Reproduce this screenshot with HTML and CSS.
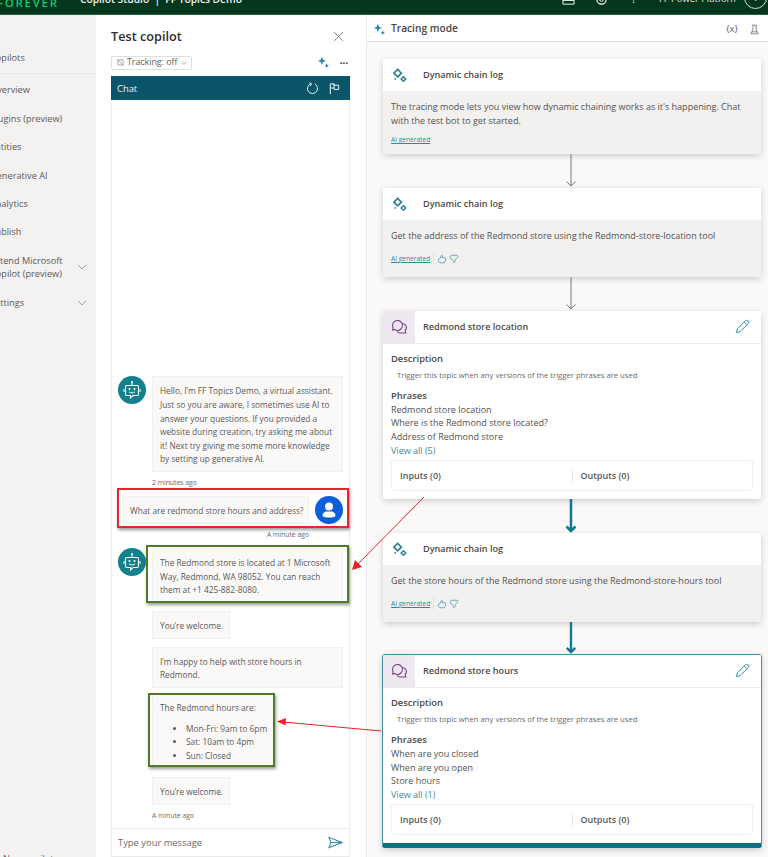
FILE: index.html
```html
<!DOCTYPE html>
<html lang="en">
<head>
<meta charset="utf-8">
<title>Copilot Studio</title>
<link rel="stylesheet" href="styles.css">
</head>
<body>
<svg class="defs" width="0" height="0" aria-hidden="true">
  <symbol id="spark-out" viewBox="0 0 16 16"><path d="M6 1.500 10 5.500 6 9.500 2 5.500Z" fill="none" stroke="currentColor" stroke-width="1.800"/><path d="M12.200 9.400 14.600 11.800 12.200 14.200 9.800 11.800Z" fill="none" stroke="currentColor" stroke-width="1.600"/><path d="M3.400 10.400 4.600 11.600 3.400 12.800 2.200 11.600Z" fill="currentColor"/></symbol>
  <symbol id="spark-fill" viewBox="0 0 16 16"><path d="M6 1 7.500 4.500 11 6 7.500 7.500 6 11 4.500 7.500 1 6 4.500 4.500Z" fill="currentColor"/><path d="M12 9.500 13 11 14.500 12 13 13 12 14.500 11 13 9.500 12 11 11Z" fill="currentColor"/></symbol>
  <symbol id="bot" viewBox="0 0 28 28"><circle cx="14" cy="14" r="14" fill="#13818c"/><path d="M14 6.500V9M9 9.500h10a1.500 1.500 0 0 1 1.500 1.500v7a1.500 1.500 0 0 1-1.500 1.500h-4l-2.500 2.500v-2.500H9A1.500 1.500 0 0 1 7.500 18v-7A1.500 1.500 0 0 1 9 9.500Z" fill="none" stroke="#fff" stroke-width="1.100"/><circle cx="14" cy="6" r="1" fill="#fff"/><circle cx="11.500" cy="13" r="1" fill="#fff"/><circle cx="16.500" cy="13" r="1" fill="#fff"/><path d="M11 15.800c1.500 1.500 4.500 1.500 6 0M6 13v3M22 13v3" fill="none" stroke="#fff" stroke-width="1"/></symbol>
  <symbol id="person" viewBox="0 0 28 28"><circle cx="14" cy="14" r="14" fill="#0b5fdc"/><circle cx="14" cy="10.500" r="4" fill="#fff"/><path d="M7.500 20c0-3 2-4.500 4-4.500h5c2 0 4 1.500 4 4.500 0 .8-3 1.500-6.500 1.500S7.500 20.800 7.500 20Z" fill="#fff"/></symbol>
  <symbol id="pencil" viewBox="0 0 16 16"><path d="M1.500 14.500 2.500 10.500 11 2a1.800 1.800 0 0 1 3 3l-8.500 8.500ZM9.800 3.200 12.800 6.200" fill="none" stroke="currentColor" stroke-width="1"/></symbol>
  <symbol id="chats" viewBox="0 0 16 16"><path d="M1.500 6.500a5 5 0 1 1 2 4l-2 .7.700-2a5 5 0 0 1-.7-2.700Z" fill="none" stroke="currentColor" stroke-width="1.100"/><path d="M11.300 4.500a4 4 0 0 1 2.900 6.800l.5 2.700H9a4 4 0 0 1-3-1.500" fill="none" stroke="currentColor" stroke-width="1.100"/></symbol>
  <symbol id="up" viewBox="0 0 12 12"><path d="M3.500 5.500 5.500 1.500c1 0 1 1 .8 3h3.200c.8 0 1.200.7 1 1.400L9.500 9.500c-.2.700-.7 1-1.300 1H5c-2.500 0-4-1.700-3.500-3.500.2-.8 1-1.500 2-1.500Z" fill="none" stroke="currentColor" stroke-width=".8"/></symbol>
  <symbol id="down" viewBox="0 0 12 12"><path d="M3 1.500h6.500c.8 0 1.300.6 1 1.400C10 5 8.500 6 7.500 6.500c.2 1.500-.2 3-1.500 4-1-1-1-2.500-1.500-3.500C3 6.500 1.500 5.500 1.500 3.500c0-1 .6-2 1.500-2Z" fill="none" stroke="currentColor" stroke-width=".8"/></symbol>
  <symbol id="chev" viewBox="0 0 12 12"><path d="M2 4 6 8 10 4" fill="none" stroke="currentColor" stroke-width=".8"/></symbol>
  <symbol id="arrow" viewBox="0 0 12 34"><path d="M6 0V32M1.500 27.500 6 32 10.500 27.500" fill="none" stroke="currentColor" stroke-width="1"/></symbol>
  <symbol id="arrow-bold" viewBox="0 0 12 34"><path d="M6 0V32M1.500 27.500 6 32 10.500 27.500" fill="none" stroke="currentColor" stroke-width="2.500"/></symbol>
</svg>

<header class="topbar">
  <span class="brand">FOREVER</span>
  <span class="product">Copilot Studio&nbsp; | &nbsp;FF Topics Demo</span>
  <span class="top-actions">
    <svg class="top-icon" viewBox="0 0 14 14"><path d="M1 4h12v8H1ZM4 4V1h6v3M1 8h12" fill="none" stroke="#fff" stroke-width="1"/></svg>
    <svg class="top-icon" viewBox="0 0 14 14"><circle cx="7" cy="7" r="5" fill="none" stroke="#fff" stroke-width="1.200"/><circle cx="7" cy="7" r="2" fill="none" stroke="#fff"/></svg>
    <span class="top-help">?</span>
    <span class="env">FF Power Platform...</span>
    <span class="avatar-top">T</span>
  </span>
</header>

<div class="workspace">
  <nav class="sidenav">
    <div class="nav-head">Copilots</div>
    <ul class="nav-list">
      <li class="nav-item">Overview</li>
      <li class="nav-item">Plugins (preview)</li>
      <li class="nav-item">Entities</li>
      <li class="nav-item">Generative AI</li>
      <li class="nav-item">Analytics</li>
      <li class="nav-item">Publish</li>
      <li class="nav-item nav-tall"><span>Extend Microsoft<br>Copilot (preview)</span><svg class="nav-chev"><use href="#chev"/></svg></li>
      <li class="nav-item"><span>Settings</span><svg class="nav-chev"><use href="#chev"/></svg></li>
    </ul>
    <div class="nav-foot">New copilot</div>
  </nav>

  <section class="test-panel">
    <div class="test-title">
      <h1>Test copilot</h1>
      <svg class="close" viewBox="0 0 12 12"><path d="M1 1 11 11M11 1 1 11" fill="none" stroke="#605e5c" stroke-width=".8"/></svg>
    </div>
    <div class="test-tools">
      <span class="tracking">
        <svg class="track-icon" viewBox="0 0 8 8"><path d="M1 1h6v6H1ZM1 1l6 6" fill="none" stroke="#8a8886" stroke-width=".8"/></svg>
        Tracking: off
        <svg class="track-chev"><use href="#chev"/></svg>
      </span>
      <span class="tool-right">
        <svg class="tool-spark"><use href="#spark-fill"/></svg>
        <span class="dots">···</span>
      </span>
    </div>
    <div class="chat">
      <div class="chat-head">
        <span>Chat</span>
        <span class="chat-actions">
          <svg class="chat-icon" viewBox="0 0 14 14"><path d="M9.500 2.200A5.400 5.400 0 1 1 4.500 2.200" fill="none" stroke="#fff" stroke-width="1"/><path d="M3.500 .8 6 2 4.500 4.300" fill="none" stroke="#fff" stroke-width="1"/></svg>
          <svg class="chat-icon" viewBox="0 0 14 14"><path d="M2.500 13V2h4v1.500h5V8H6.500V6.500h-4M6.500 2v4.500" fill="none" stroke="#fff" stroke-width="1"/></svg>
        </span>
      </div>
      <div class="messages">
        <div class="msg">
          <svg class="msg-avatar"><use href="#bot"/></svg>
          <div class="bubble">Hello, I’m FF Topics Demo, a virtual assistant.<br>Just so you are aware, I sometimes use AI to<br>answer your questions. If you provided a<br>website during creation, try asking me about<br>it! Next try giving me some more knowledge<br>by setting up generative AI.</div>
        </div>
        <div class="stamp stamp-bot">2 minutes ago</div>
        <div class="msg msg-user">
          <div class="bubble">What are redmond store hours and address?</div>
          <svg class="msg-avatar"><use href="#person"/></svg>
        </div>
        <div class="stamp stamp-user">A minute ago</div>
        <div class="msg msg-third">
          <svg class="msg-avatar"><use href="#bot"/></svg>
          <div class="bubble">The Redmond store is located at 1 Microsoft<br>Way, Redmond, WA 98052. You can reach<br>them at +1 425-882-8080.</div>
        </div>
        <div class="bubble bubble-indent bubble-fit">You’re welcome.</div>
        <div class="bubble bubble-indent bubble-full">I’m happy to help with store hours in<br>Redmond.</div>
        <div class="bubble bubble-indent bubble-fit bubble-list">The Redmond hours are:
          <ul class="hours">
            <li>Mon-Fri: 9am to 6pm</li>
            <li>Sat: 10am to 4pm</li>
            <li>Sun: Closed</li>
          </ul>
        </div>
        <div class="bubble bubble-indent bubble-fit bubble-last">You’re welcome.</div>
        <div class="stamp stamp-end">A minute ago</div>
      </div>
      <div class="composer">
        <span>Type your message</span>
        <svg class="send" viewBox="0 0 16 14"><path d="M1 1.500 15 7 1 12.500 3 7ZM3 7H15" fill="none" stroke="#2b8a9b" stroke-width="1.100"/></svg>
      </div>
    </div>
  </section>

  <main class="trace">
    <div class="trace-head">
      <svg class="trace-spark"><use href="#spark-fill"/></svg>
      <span class="trace-title">Tracing mode</span>
      <span class="trace-var">{x}</span>
      <svg class="trace-flask" viewBox="0 0 14 14"><path d="M4 1.500h6M5 1.500V7L2.500 12.500h9L9 7V1.500M3.500 10h7" fill="none" stroke="#605e5c" stroke-width=".9"/></svg>
    </div>
    <div class="flow">
      <article class="card">
        <div class="card-head"><span class="card-mark"><svg class="mark-spark"><use href="#spark-out"/></svg></span><span class="card-name">Dynamic chain log</span></div>
        <div class="log-body">
          <p class="log-text">The tracing mode lets you view how dynamic chaining works as it's happening. Chat<br>with the test bot to get started.</p>
          <div class="log-meta"><a class="ai-link">AI generated</a></div>
        </div>
      </article>
      <svg class="link link-grey"><use href="#arrow"/></svg>
      <article class="card">
        <div class="card-head"><span class="card-mark"><svg class="mark-spark"><use href="#spark-out"/></svg></span><span class="card-name">Dynamic chain log</span></div>
        <div class="log-body">
          <p class="log-text">Get the address of the Redmond store using the Redmond-store-location tool</p>
          <div class="log-meta log-meta-votes"><a class="ai-link">AI generated</a><span class="vote-sep"></span><svg class="vote"><use href="#up"/></svg><svg class="vote"><use href="#down"/></svg></div>
        </div>
      </article>
      <svg class="link link-grey"><use href="#arrow"/></svg>
      <article class="card">
        <div class="card-head card-head-line"><span class="card-mark card-mark-topic"><svg class="mark-chat"><use href="#chats"/></svg></span><span class="card-name">Redmond store location</span><svg class="edit"><use href="#pencil"/></svg></div>
        <div class="topic-body">
          <h3 class="label">Description</h3>
          <p class="desc">Trigger this topic when any versions of the trigger phrases are used</p>
          <h3 class="label">Phrases</h3>
          <p class="phrase">Redmond store location</p>
          <p class="phrase">Where is the Redmond store located?</p>
          <p class="phrase">Address of Redmond store</p>
          <a class="view-all">View all (5)</a>
          <div class="io"><span class="io-cell">Inputs (0)</span><span class="io-cell io-right">Outputs (0)</span></div>
        </div>
      </article>
      <svg class="link link-teal"><use href="#arrow-bold"/></svg>
      <article class="card">
        <div class="card-head"><span class="card-mark"><svg class="mark-spark"><use href="#spark-out"/></svg></span><span class="card-name">Dynamic chain log</span></div>
        <div class="log-body">
          <p class="log-text">Get the store hours of the Redmond store using the Redmond-store-hours tool</p>
          <div class="log-meta log-meta-votes"><a class="ai-link">AI generated</a><span class="vote-sep"></span><svg class="vote"><use href="#up"/></svg><svg class="vote"><use href="#down"/></svg></div>
        </div>
      </article>
      <svg class="link link-teal link-short"><use href="#arrow-bold"/></svg>
      <article class="card card-active">
        <div class="card-head card-head-line"><span class="card-mark card-mark-topic"><svg class="mark-chat"><use href="#chats"/></svg></span><span class="card-name">Redmond store hours</span><svg class="edit"><use href="#pencil"/></svg></div>
        <div class="topic-body">
          <h3 class="label">Description</h3>
          <p class="desc">Trigger this topic when any versions of the trigger phrases are used</p>
          <h3 class="label">Phrases</h3>
          <p class="phrase">When are you closed</p>
          <p class="phrase">When are you open</p>
          <p class="phrase">Store hours</p>
          <a class="view-all">View all (1)</a>
          <div class="io"><span class="io-cell">Inputs (0)</span><span class="io-cell io-right">Outputs (0)</span></div>
        </div>
      </article>
    </div>
  </main>
</div>

<div class="mark mark-red"></div>
<div class="mark mark-green-a"></div>
<div class="mark mark-green-b"></div>
<svg class="callouts" viewBox="0 0 768 857">
  <path d="M424 497 356 566" stroke="#e8232a" stroke-width="1" fill="none"/>
  <path d="M352 570 355 560 362 567Z" fill="#e8232a"/>
  <path d="M381 731 283 722" stroke="#e8232a" stroke-width="1" fill="none"/>
  <path d="M277 721.500 286 718 285.500 725.500Z" fill="#e8232a"/>
</svg>
</body>
</html>
```

FILE: styles.css
```css
* { box-sizing: border-box; }
html, body { margin: 0; padding: 0; }
body {
  position: relative;
  width: 768px;
  height: 857px;
  overflow: hidden;
  background: #fff;
  color: #484644;
  font-family: "Open Sans", "Liberation Sans", sans-serif;
  font-size: 9.4px;
  line-height: 13.6px;
}
p, h1, h3, ul { margin: 0; padding: 0; font-weight: 400; }
.defs { position: absolute; }

.topbar {
  display: flex;
  align-items: flex-end;
  height: 15px;
  padding-bottom: 8px;
  background: #03361b;
  border-bottom: 1px solid #2f5c45;
  color: #fff;
  white-space: nowrap;
}
.brand {
  flex: none;
  width: 80px;
  margin: 0 0 -4px -3px;
  color: #15c874;
  font-size: 11.500px;
  font-weight: 600;
  letter-spacing: 1.700px;
  line-height: 14px;
}
.product { margin-left: 3px; font-size: 10.200px; font-weight: 600; line-height: 14px; color: #f2f2f2; }
.top-actions { margin-left: auto; display: flex; align-items: flex-end; }
.top-icon { flex: none; width: 13px; height: 13px; margin-right: 20px; }
.top-help { width: 12px; margin-right: 19px; line-height: 14px; font-size: 10px; text-align: center; }
.env { width: 78px; font-size: 9.400px; line-height: 14px; color: #eee; overflow: hidden; }
.avatar-top {
  flex: none;
  width: 23px;
  height: 23px;
  margin: 0 1px -3px 7px;
  border: 1px solid #d8e2dc;
  border-radius: 50%;
  font-size: 10px;
  line-height: 21px;
  text-align: center;
}

.workspace { display: flex; height: 842px; }

.sidenav {
  position: relative;
  flex: none;
  width: 96px;
  background: #f3f2f1;
  overflow: hidden;
  white-space: nowrap;
  color: #5b5957;
  font-size: 9.200px;
}
.nav-head {
  width: 106px;
  height: 59px;
  margin-left: -10px;
  padding-top: 36px;
  border-bottom: 1px solid #e8e6e4;
  line-height: 14px;
}
.nav-list { list-style: none; padding-top: 2px; margin-left: -10px; }
.nav-item {
  display: flex;
  align-items: center;
  justify-content: space-between;
  width: 98px;
  height: 28.400px;
}
.nav-tall { height: 42px; }
.nav-chev { flex: none; width: 12px; height: 12px; color: #8a8886; }
.nav-foot { position: absolute; left: 3px; bottom: -8.600px; }

.test-panel {
  flex: none;
  width: 270px;
  display: flex;
  flex-direction: column;
  padding: 0 16px 0 15px;
  background: #fff;
}
.test-title { display: flex; justify-content: space-between; align-items: center; height: 41px; padding: 2px 6px 0 0; }
.test-title h1 { font-size: 12.700px; font-weight: 600; color: #2f2e2d; }
.close { width: 11px; height: 11px; }
.test-tools { display: flex; justify-content: space-between; align-items: center; height: 13px; }
.tracking {
  display: inline-flex;
  align-items: center;
  gap: 3px;
  width: 81px;
  height: 14px;
  padding-left: 5px;
  border: 1px solid #e1dfdd;
  border-radius: 2px;
  white-space: nowrap;
  color: #605e5c;
  font-size: 8.800px;
}
.track-icon { flex: none; width: 7px; height: 7px; }
.track-chev { flex: none; width: 8px; height: 8px; color: #605e5c; }
.tool-right { display: flex; align-items: center; gap: 9px; padding-right: 2px; }
.tool-spark { width: 13px; height: 13px; color: #2b8a9b; }
.dots { font-weight: 700; font-size: 11px; color: #484644; letter-spacing: -.3px; }

.chat {
  display: flex;
  flex-direction: column;
  height: 781px;
  margin-top: 7px;
  border: 1px solid #edebe9;
  border-top: 0;
}
.chat-head {
  flex: none;
  display: flex;
  justify-content: space-between;
  align-items: center;
  height: 24px;
  margin: 0 -1px;
  padding: 1px 9px 0 6px;
  background: #0b556a;
  color: #f2f2f2;
}
.chat-actions { display: flex; gap: 9px; }
.chat-icon { width: 13px; height: 13px; }
.messages {
  flex: 1;
  min-height: 0;
  display: flex;
  flex-direction: column;
  justify-content: flex-end;
  padding: 0 6px 7px;
  color: #5a5856;
  font-size: 8.300px;
}
.msg { display: flex; gap: 6px; }
.msg-user { justify-content: flex-end; }
.msg-avatar { flex: none; width: 28px; height: 28px; }
.msg-third { margin: 8px 0; }
.bubble {
  padding: 7px 7px 5px;
  background: #faf9f8;
  border: 1px solid #f3f1f0;
  white-space: nowrap;
}
.msg .bubble { flex: none; }
.msg:not(.msg-user) .bubble { width: 191px; }
.msg-user .bubble { width: 187px; }
.bubble-indent { margin-left: 34px; }
.bubble-fit { width: 78px; height: 28px; margin-bottom: 8px; }
.bubble-full { width: 191px; margin-bottom: 5px; }
.bubble-list { width: 122px; height: 74px; margin-bottom: 10px; }
.bubble-last { margin-bottom: 0; }
.hours { margin: 7px 0 0 20px; padding-left: 6px; list-style: disc; }
.stamp { font-size: 6.800px; line-height: 10px; color: #6b6967; }
.stamp-bot { margin: 6px 0 8px 34px; }
.stamp-user { align-self: flex-end; margin: 6px 34px 0 0; }
.stamp-end { margin: 6px 0 0 34px; }
.composer {
  flex: none;
  display: flex;
  justify-content: space-between;
  align-items: center;
  height: 28px;
  padding: 0 6px;
  border-top: 1px solid #edebe9;
  color: #6b6967;
}
.send { width: 15px; height: 13px; }

.trace {
  flex: 1;
  min-width: 0;
  display: flex;
  flex-direction: column;
  background: #faf9f8;
  border-left: 1px solid #edebe9;
  font-size: 9px;
}
.trace-head {
  flex: none;
  display: flex;
  align-items: center;
  height: 27px;
  padding: 2px 8px 0 6px;
  background: #fff;
  border-bottom: 1px solid #e1dfdd;
  font-size: 10.200px;
}
.trace-spark { width: 13px; height: 13px; color: #2b8a9b; margin-right: 5px; }
.trace-title { flex: 1; font-weight: 600; color: #484644; }
.trace-var { margin-right: 11px; font-size: 9.500px; color: #605e5c; }
.trace-flask { width: 11px; height: 11px; }

.flow {
  display: flex;
  flex-direction: column;
  align-items: flex-start;
  padding: 17px 0 0 16px;
}
.card {
  flex: none;
  width: 378px;
  background: #fff;
  border-radius: 2px;
  box-shadow: 0 2px 6px rgba(0,0,0,.18);
}
.card-active { width: 380px; margin: 0 -1px; border: 1.500px solid #3a93a5; border-bottom: 5px solid #0f6f83; border-radius: 3px; }
.card-head { display: flex; align-items: center; height: 32px; background: #fff; }
.card-head-line { height: 33px; border-bottom: 1px solid #edebe9; }
.card-mark { flex: none; display: flex; align-items: center; justify-content: center; width: 32px; height: 32px; }
.card-mark-topic { background: #eee8f0; }
.mark-spark { width: 15px; height: 15px; color: #2b8193; }
.mark-chat { width: 16px; height: 16px; color: #7b3f86; }
.card-name { flex: 1; margin-left: 8px; font-weight: 600; color: #4b4a48; font-size: 9.100px; }
.edit { width: 15px; height: 15px; margin-right: 11px; color: #2b8a9b; }
.log-body { display: flow-root; padding: 9px 8px 0; background: #f2f1f0; color: #54524f; }
.log-text { white-space: nowrap; }
.log-meta { display: flex; align-items: center; height: 12px; margin: 7px 0 8px; }
.log-meta-votes { height: 14px; margin: 9px 0 11px; }
.ai-link { font-size: 6.600px; color: #2b8a9b; text-decoration: underline; }
.vote-sep { width: 1px; height: 13px; margin: 0 3px; background: #e1dfdd; }
.vote { width: 10px; height: 10px; margin-right: 2px; color: #2b8a9b; }
.topic-body { padding: 8px; color: #54524f; }
.label { font-size: 9.400px; font-weight: 600; color: #4b4a48; line-height: 13.600px; }
.desc { margin: 3.400px 0 7.500px 6px; font-size: 7.700px; line-height: 13px; color: #6b6967; }
.phrase { line-height: 13.600px; }
.view-all { display: block; color: #3f8a9d; line-height: 13.600px; }
.io { display: flex; align-items: center; height: 31px; margin-top: 3px; border: 1px solid #f0eeed; border-radius: 3px; background: #fff; }
.io-cell { flex: 1; padding-left: 8px; font-weight: 600; color: #5a5856; }
.io-right { border-left: 1px solid #e8e6e4; line-height: 13px; }
.link { display: block; flex: none; width: 12px; height: 34px; margin-left: 182px; }
.link-short { height: 32px; }
.link-grey { color: #7a7876; }
.link-teal { color: #0f7a8c; }

.mark { position: absolute; box-shadow: 1px 2px 3px rgba(0,0,0,.4); pointer-events: none; }
.mark-red { left: 117px; top: 488px; width: 232px; height: 40px; border: 2px solid #e8232a; }
.mark-green-a { left: 146px; top: 545px; width: 203px; height: 58px; border: 2px solid #4f7a28; }
.mark-green-b { left: 148px; top: 693px; width: 127px; height: 74px; border: 2px solid #4f7a28; }
.callouts { position: absolute; left: 0; top: 0; width: 768px; height: 857px; pointer-events: none; }
```
